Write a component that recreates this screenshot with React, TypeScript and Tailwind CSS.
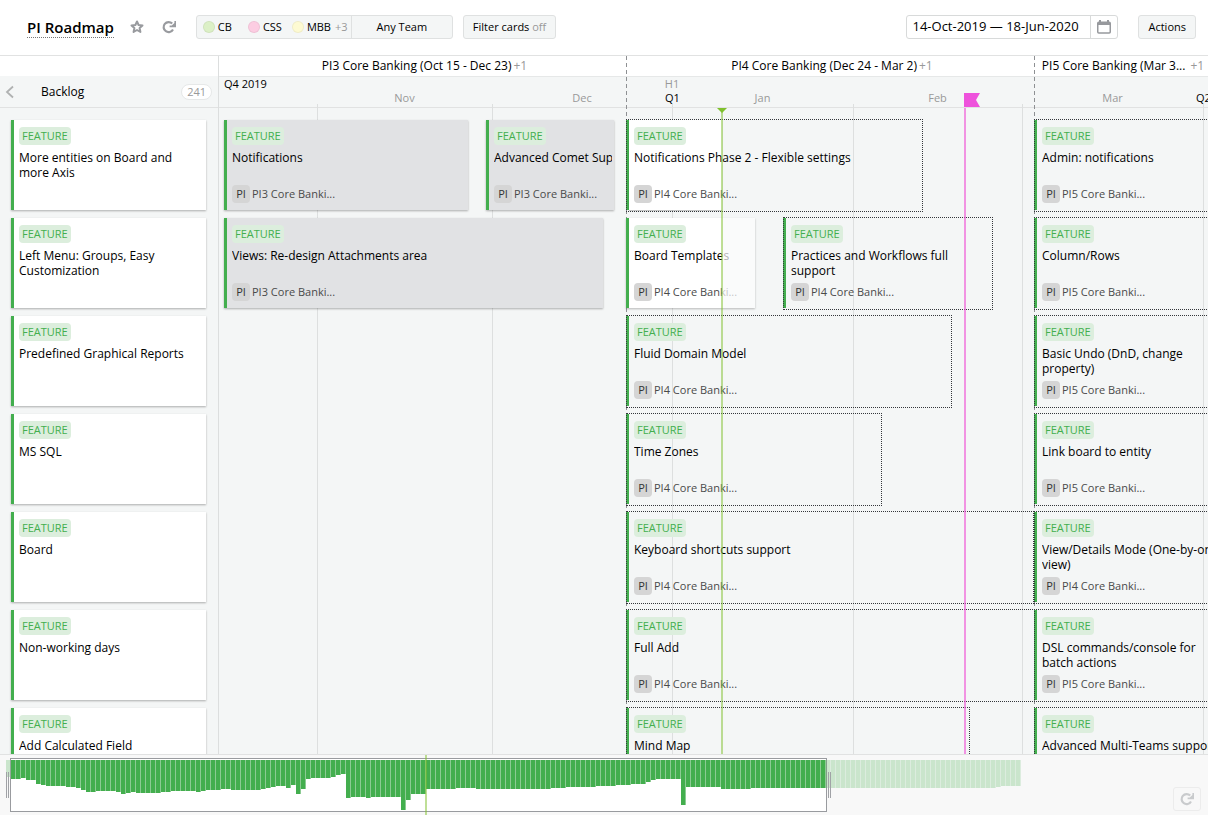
import { ReactNode } from 'react';

type CardKind = 'backlog' | 'past' | 'current' | 'planned';

interface Card {
  title: string;
  kind: CardKind;
  start: number;
  end: number;
  pi?: string;
  done?: number;
}

// start / end are pixels from the left edge of the timeline
const NOW = 502;

const backlog = [
  'More entities on Board and more Axis',
  'Left Menu: Groups, Easy Customization',
  'Predefined Graphical Reports',
  'MS SQL',
  'Board',
  'Non-working days',
  'Add Calculated Field',
];

const lanes: Card[][] = [
  [
    { title: 'Notifications', kind: 'past', start: 5, end: 249, pi: 'PI3' },
    { title: 'Advanced Comet Support', kind: 'past', start: 267, end: 395, pi: 'PI3' },
    { title: 'Notifications Phase 2 - Flexible settings', kind: 'planned', start: 407, end: 704, pi: 'PI4', done: 96 },
    { title: 'Admin: notifications', kind: 'planned', start: 815, end: 1040, pi: 'PI5' },
  ],
  [
    { title: 'Views: Re-design Attachments area', kind: 'past', start: 5, end: 384, pi: 'PI3' },
    { title: 'Board Templates', kind: 'current', start: 407, end: 536, pi: 'PI4' },
    { title: 'Practices and Workflows full support', kind: 'planned', start: 564, end: 774, pi: 'PI4' },
    { title: 'Column/Rows', kind: 'planned', start: 815, end: 1040, pi: 'PI5' },
  ],
  [
    { title: 'Fluid Domain Model', kind: 'planned', start: 407, end: 733, pi: 'PI4' },
    { title: 'Basic Undo (DnD, change property)', kind: 'planned', start: 815, end: 1000, pi: 'PI5' },
  ],
  [
    { title: 'Time Zones', kind: 'planned', start: 407, end: 663, pi: 'PI4' },
    { title: 'Link board to entity', kind: 'planned', start: 815, end: 1040, pi: 'PI5' },
  ],
  [
    { title: 'Keyboard shortcuts support', kind: 'planned', start: 407, end: 815, pi: 'PI4' },
    { title: 'View/Details Mode (One-by-one view)', kind: 'planned', start: 815, end: 1016, pi: 'PI4' },
  ],
  [
    { title: 'Full Add', kind: 'planned', start: 407, end: 816, pi: 'PI4' },
    { title: 'DSL commands/console for batch actions', kind: 'planned', start: 815, end: 1000, pi: 'PI5' },
  ],
  [
    { title: 'Mind Map', kind: 'planned', start: 407, end: 751, pi: 'PI4' },
    { title: 'Advanced Multi-Teams support', kind: 'planned', start: 815, end: 1040, pi: 'PI5' },
  ],
];

const monthLines = [98, 273, 453, 634, 803, 984];

// [number of bars, bar height]
const before: [number, number][] = [[1, 17]];
const visible: [number, number][] = [
  [2, 19], [1, 18], [2, 20], [1, 24], [1, 25], [4, 26], [2, 27], [1, 28], [1, 30], [2, 32],
  [4, 31], [1, 32], [1, 34], [1, 33], [1, 32], [5, 33], [2, 32], [5, 31], [1, 32], [1, 31],
  [3, 30], [2, 29], [6, 30], [1, 29], [1, 28], [1, 27], [2, 26], [1, 28], [1, 25], [1, 34],
  [1, 29], [1, 19], [4, 18], [1, 17], [1, 15], [1, 14], [1, 38], [3, 37], [1, 38], [6, 37],
  [1, 50], [1, 40], [3, 34], [6, 29], [4, 28], [15, 29], [3, 28], [6, 27], [4, 26], [3, 25],
  [3, 24], [1, 22], [1, 20], [5, 19], [1, 45], [7, 27], [6, 29], [15, 28],
];
const after: [number, number][] = [[34, 28], [1, 27], [4, 26]];

const cardStyles: Record<CardKind, string> = {
  backlog: 'bg-white shadow-[0_1px_2px_rgba(0,0,0,0.3)]',
  past: 'bg-[#e1e2e4] shadow-[0_1px_2px_rgba(0,0,0,0.3)]',
  current: 'bg-white shadow-[0_1px_2px_rgba(0,0,0,0.25)]',
  planned:
    'before:absolute before:-top-px before:-bottom-[2px] before:-left-[3px] before:right-0 before:border before:border-dotted before:border-[#33363a]',
};

function RefreshIcon({ className }: { className: string }) {
  return (
    <svg viewBox="0 0 14 14" className={className} fill="none" aria-hidden="true">
      <path d="M11 9.500A5 5 0 1 1 10.200 3.600" stroke="currentColor" strokeWidth="2.200" />
      <path d="M14 1v6.200H7.600V5.600h2.200L12.400 3V1z" fill="currentColor" />
    </svg>
  );
}

function FeatureCard({ card }: { card: Card }) {
  return (
    <article
      className={`relative col-start-1 row-start-1 h-[90px] border-l-3 border-[#43ae4e] pr-[2px] pl-[5px] ${cardStyles[card.kind]}`}
      style={card.kind === 'backlog' ? undefined : { marginLeft: card.start, width: card.end - card.start }}
    >
      {card.done && (
        <div
          className="absolute inset-y-0 left-0 bg-white shadow-[0_1px_1px_rgba(0,0,0,0.2)]"
          style={{ width: card.done - 3 }}
        />
      )}
      <div className="relative flex h-full flex-col items-start overflow-hidden pt-[7px]">
        <span className="h-[18px] rounded-sm bg-[#dceedd] px-[3px] text-[11px] leading-[18px] text-[#43ae4e]">
          FEATURE
        </span>
        <h3 className={`mt-[5px] h-[30px] w-full text-xs leading-[15px] text-black ${card.kind === 'past' ? 'whitespace-nowrap' : 'pr-[6px]'}`}>
          {card.title}
        </h3>
        {card.pi && (
          <p className="mt-[5px] flex items-center gap-[2px] text-[11px] leading-[18px] whitespace-nowrap text-[#4a4a4a]">
            <span className="w-[18px] rounded-sm bg-[#d5d5d5] text-center text-[#333]">PI</span>
            {card.pi} Core Banki...
          </p>
        )}
      </div>
      {card.kind === 'current' && (
        <div
          className="absolute inset-y-0 right-0 bg-[#f8faf9]/70"
          style={{ left: NOW - card.start - 2 }}
        />
      )}
    </article>
  );
}

function PiHeading({ children, extra }: { children: ReactNode; extra: string }) {
  return (
    <h2 className="flex min-w-0 items-center justify-center gap-[2px] overflow-hidden pl-1 text-xs whitespace-nowrap text-black">
      {children}
      <span className="text-[#999]">{extra}</span>
    </h2>
  );
}

function Bars({ groups, faded }: { groups: [number, number][]; faded?: boolean }) {
  return (
    <div className={`flex items-start ${faded ? 'opacity-25' : ''}`}>
      {groups.flatMap(([count, height], g) =>
        Array.from({ length: count }, (_, i) => (
          <div
            key={`${g}-${i}`}
            className="w-[5px] shrink-0 border-r border-[#8ccb93] bg-[#43ae4e]"
            style={{ height }}
          />
        ))
      )}
    </div>
  );
}

function Toolbar() {
  return (
    <header className="flex h-14 shrink-0 items-center border-b border-[#e1e2e2] bg-white pr-3 pb-px pl-[27px] text-[11px] text-black">
      <h1 className="border-b border-dotted border-[#777] text-[15px] leading-[20px] font-semibold">PI Roadmap</h1>
      <button type="button" aria-label="Add to favourites" className="ml-4 text-[#999b9f]">
        <svg viewBox="0 0 14 14" className="size-[14px]" fill="none" stroke="currentColor" strokeWidth="2" strokeLinejoin="round" aria-hidden="true">
          <path d="M7 1.500l1.600 3.500 3.900.4-2.900 2.600.8 3.900L7 10l-3.400 1.900.8-3.900L1.500 5.400l3.900-.4z" />
        </svg>
      </button>
      <button type="button" aria-label="Refresh" className="ml-[18px] text-[#999b9f]">
        <RefreshIcon className="size-[14px]" />
      </button>

      <div className="ml-5 flex h-6 rounded-[3px] border border-[#dfe1e1] bg-[#f4f6f6]">
        <button type="button" className="flex w-[155px] items-center border-r border-[#dfe1e1] pl-[6px]">
          <span className="mr-[3px] size-3 rounded-full border border-black/5 bg-[#dcf0c6]" />
          CB
          <span className="mr-[3px] ml-4 size-3 rounded-full border border-black/5 bg-[#fccde2]" />
          CSS
          <span className="mr-[3px] ml-[10px] size-3 rounded-full border border-black/5 bg-[#fdfad2]" />
          MBB
          <span className="ml-1 text-[#999]">+3</span>
        </button>
        <button type="button" className="w-[100px] text-center">
          Any Team
        </button>
      </div>
      <button type="button" className="ml-[10px] h-6 rounded-[3px] border border-[#dfe1e1] bg-[#f4f6f6] px-[9px]">
        Filter cards <span className="text-[#999]">off</span>
      </button>

      <div className="ml-auto flex h-6 rounded-[3px] border border-[#d8dada]">
        <input
          aria-label="Date range"
          defaultValue="14-Oct-2019 — 18-Jun-2020"
          className="w-[184px] border-r border-[#d8dada] pl-[5px] text-[13px] outline-none"
        />
        <button type="button" aria-label="Choose dates" className="flex w-[26px] items-center justify-center text-[#97999d]">
          <svg viewBox="0 0 14 14" className="size-[14px]" aria-hidden="true">
            <path
              fill="currentColor"
              fillRule="evenodd"
              d="M2 0h2v1.400h6V0h2v1.400h.2A1.800 1.800 0 0 1 14 3.200v8.800a1.800 1.800 0 0 1-1.800 1.800H1.800A1.800 1.800 0 0 1 0 12V3.200a1.800 1.800 0 0 1 1.800-1.800H2zM1.500 5v6.700a.6.6 0 0 0 .6.6h9.800a.6.6 0 0 0 .6-.6V5z"
            />
          </svg>
        </button>
      </div>
      <button type="button" className="ml-5 h-6 rounded-[3px] border border-[#dfe1e1] bg-[#f4f6f6] px-[9px]">
        Actions
      </button>
    </header>
  );
}

function BacklogColumn() {
  return (
    <aside className="flex w-[219px] shrink-0 flex-col border-r border-[#dcdede]">
      <div className="h-[20px] shrink-0 bg-white" />
      <div className="flex h-8 shrink-0 items-center border-b border-[#e1e2e2] pr-[6px] pl-[5px]">
        <button type="button" aria-label="Collapse backlog" className="text-[#b0b2b2]">
          <svg viewBox="0 0 10 14" className="h-[14px] w-[10px]" fill="none" stroke="currentColor" strokeWidth="1.800" aria-hidden="true">
            <path d="M8 1.500L2 7l6 5.500" />
          </svg>
        </button>
        <h2 className="ml-[26px] text-xs text-black">Backlog</h2>
        <span className="ml-auto rounded-full border border-[#e6e8e8] bg-white px-[5px] text-[11px] leading-[14px] text-[#999]">
          241
        </span>
      </div>
      <div className="flex min-h-0 flex-1 flex-col gap-2 overflow-hidden pt-3 pr-3 pl-[11px]">
        {backlog.map((title) => (
          <div key={title} className="shrink-0">
            <FeatureCard card={{ title, kind: 'backlog', start: 0, end: 0 }} />
          </div>
        ))}
      </div>
    </aside>
  );
}

function Timeline() {
  return (
    <section className="relative flex min-w-0 flex-1 flex-col overflow-hidden">
      <div className="grid h-[21px] shrink-0 grid-cols-[407px_408px_minmax(170px,1fr)] border-b border-[#e6e8e8] bg-white">
        <PiHeading extra="+1">PI3 Core Banking (Oct 15 - Dec 23)</PiHeading>
        <PiHeading extra="+1">PI4 Core Banking (Dec 24 - Mar 2)</PiHeading>
        <PiHeading extra="+1">
          <span className="mr-[3px]">PI5 Core Banking (Mar 3...</span>
        </PiHeading>
      </div>
      <div className="h-[31px] shrink-0 border-b border-[#e1e2e2] text-[11px] leading-[14px] text-[#999]">
        <div className="grid grid-cols-[407px_92px]">
          <span className="pl-[5px] text-black">Q4 2019</span>
          <span className="text-center">H1</span>
        </div>
        <div className="grid grid-cols-[98px_175px_180px_181px_169px_181px_1fr]">
          <span />
          <span className="text-center">Nov</span>
          <span className="text-center">Dec</span>
          <span className="relative text-center">
            <span className="absolute -left-[7px] text-black">Q1</span>
            Jan
          </span>
          <span className="text-center">Feb</span>
          <span className="text-center">Mar</span>
          <span className="relative">
            <span className="absolute -left-[7px] text-black">Q2</span>
          </span>
        </div>
      </div>

      {monthLines.map((x) => (
        <div key={x} className="absolute top-12 bottom-0 w-px bg-[#dddfdf]" style={{ left: x }} />
      ))}
      {[407, 815].map((x) => (
        <div
          key={x}
          className="absolute inset-y-0 w-px bg-[repeating-linear-gradient(to_bottom,#8e9093_0_4px,transparent_4px_7px)]"
          style={{ left: x }}
        />
      ))}

      <div className="min-h-0 flex-1 overflow-hidden pt-3">
        {lanes.map((lane, i) => (
          <div key={i} className="relative grid h-[98px] grid-cols-[100%] items-start justify-items-start">
            {lane.map((card) => (
              <FeatureCard key={card.title} card={card} />
            ))}
          </div>
        ))}
      </div>

      <div className="absolute top-[52px] bottom-0 w-[2px] bg-[#7fc02d]/50" style={{ left: NOW }} />
      <svg viewBox="0 0 10 5" className="absolute top-[52px] h-[5px] w-[10px]" style={{ left: NOW - 4 }} aria-hidden="true">
        <path d="M0 0h10L5 5z" fill="#7fc02d" />
      </svg>
      <div className="absolute top-[52px] bottom-0 left-[745px] w-[2px] bg-[#ee52d6]/60" />
      <svg viewBox="0 0 16 14" className="absolute top-[37px] left-[745px] h-[14px] w-4" aria-hidden="true">
        <path d="M0 0h16l-4 7 4 7H0z" fill="#ee52dc" />
      </svg>
    </section>
  );
}

function Handle() {
  return <div className="h-[26px] w-[3px] border-x border-[#a0a2a6]" />;
}

function Minimap() {
  return (
    <footer className="relative flex h-[61px] shrink-0 items-start overflow-hidden border-t border-[#e1e2e2] bg-[#f8f8f8] pt-[5px] pl-[6px]">
      <div className="absolute top-[3px] left-[10px] h-[54px] w-[817px] border border-[#999b9f] bg-white" />
      <div className="relative flex">
        <Bars groups={before} faded />
        <Bars groups={visible} />
        <Bars groups={after} faded />
      </div>
      <div className="absolute top-[17px] left-[6px]">
        <Handle />
      </div>
      <div className="absolute top-[17px] left-[828px]">
        <Handle />
      </div>
      <div className="absolute top-0 bottom-0 left-[425px] w-[2px] bg-[#7fc02d]/50" />
      <button
        type="button"
        aria-label="Reset range"
        className="absolute right-[7px] bottom-1 flex h-6 w-7 items-center justify-center rounded-[3px] border border-[#ececec] text-[#c9cbcd]"
      >
        <RefreshIcon className="size-[14px]" />
      </button>
    </footer>
  );
}

export default function App() {
  return (
    <div className="flex h-screen flex-col overflow-hidden bg-[#f4f6f6] font-['Open_Sans','Noto_Sans',sans-serif]">
      <Toolbar />
      <main className="flex min-h-0 flex-1">
        <BacklogColumn />
        <Timeline />
      </main>
      <Minimap />
    </div>
  );
}
